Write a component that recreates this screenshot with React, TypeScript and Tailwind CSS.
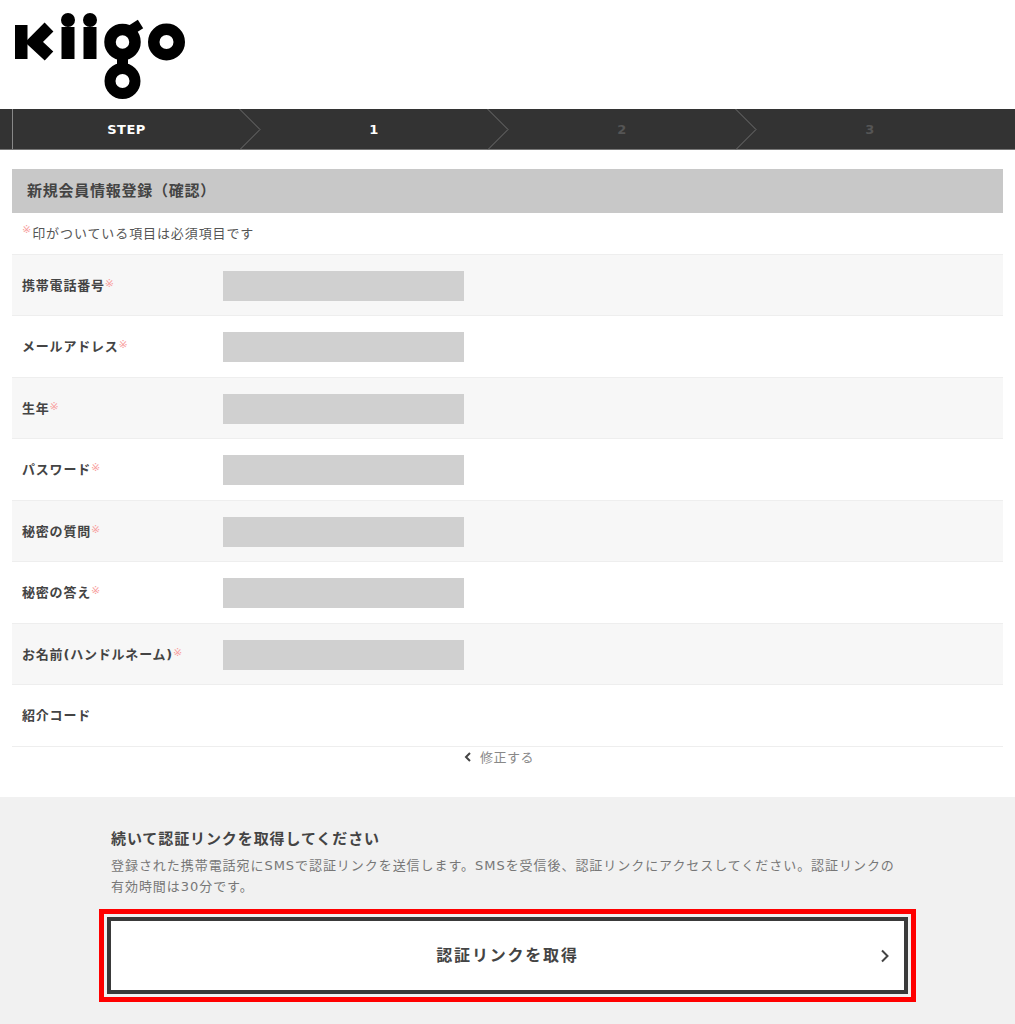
const font = "font-['DejaVu_Sans','Noto_Sans_CJK_JP',sans-serif]";

const rows = [
  { label: "携帯電話番号", required: true, value: true },
  { label: "メールアドレス", required: true, value: true },
  { label: "生年", required: true, value: true },
  { label: "パスワード", required: true, value: true },
  { label: "秘密の質問", required: true, value: true },
  { label: "秘密の答え", required: true, value: true },
  { label: "お名前(ハンドルネーム)", required: true, value: true },
  { label: "紹介コード", required: false, value: false },
];

const steps = [
  { label: "STEP", color: "text-white" },
  { label: "1", color: "text-white" },
  { label: "2", color: "text-[#555555]" },
  { label: "3", color: "text-[#555555]" },
];

function Logo() {
  return (
    <svg width="200" height="109" viewBox="0 0 200 109" className="block">
      <rect x="15" y="25" width="12.5" height="34" />
      <path d="M49 27 L34 42 L49 56" fill="none" stroke="#000" strokeWidth="12.5" />
      <rect x="61.5" y="27" width="13" height="32" />
      <circle cx="68" cy="20" r="7" />
      <rect x="83.5" y="27" width="13" height="32" />
      <circle cx="90" cy="20" r="7" />
      <circle cx="122.5" cy="42" r="12.5" fill="none" stroke="#000" strokeWidth="11.5" />
      <circle cx="122.5" cy="81" r="12.5" fill="none" stroke="#000" strokeWidth="11" />
      <rect x="117" y="58" width="11" height="8" />
      <path d="M128 32 L140.5 24" fill="none" stroke="#000" strokeWidth="10" />
      <circle cx="166.5" cy="42" r="12.75" fill="none" stroke="#000" strokeWidth="11.5" />
    </svg>
  );
}

function StepBar() {
  return (
    <div className="flex h-[41px] border-b border-[#777777] bg-[#333333] pl-3">
      <div className="flex border-l border-[#888888]">
        {steps.map((s, i) => (
          <div
            key={s.label}
            className={`relative flex items-center justify-center pr-5 ${i === 0 ? "w-[247px]" : "w-[248px]"}`}
          >
            <span className={`relative top-px text-[13px] font-bold tracking-[0.5px] ${s.color}`}>{s.label}</span>
            {s.label !== "3" && (
              <svg width="22" height="41" viewBox="0 0 22 41" className="absolute right-[-1px] top-0">
                <path d="M0.5 0 L21 20.5 L0.5 41" fill="none" stroke="#6e6e6e" strokeWidth="1" />
              </svg>
            )}
          </div>
        ))}
      </div>
    </div>
  );
}

function Required() {
  return <span className="relative top-[-3px] text-[11px] font-normal tracking-normal text-[#f8a0a0]">※</span>;
}

export default function App() {
  return (
    <div className={`h-[1024px] overflow-hidden bg-white text-[#444444] ${font}`}>
      <Logo />
      <StepBar />

      <div className="mx-3 mt-[19px]">
        <h1 className="flex h-11 items-center bg-[#c8c8c8] px-[15px] text-[15px] font-bold tracking-[0.75px] text-[#444444]">
          新規会員情報登録（確認）
        </h1>
        <p className="flex h-[40.75px] items-center px-2.5 text-[13px] tracking-[0.9px] text-[#555555]">
          <Required />
          <span className="ml-px">印がついている項目は必須項目です</span>
        </p>
        {rows.map((row, i) => (
          <div
            key={row.label}
            className={`flex h-[61.5px] items-center border-t border-[#eeeeee] px-2.5 pt-px ${i % 2 === 0 ? "bg-[#f7f7f7]" : "bg-white"}`}
          >
            <div className="w-[201px] text-[13px] font-bold tracking-[0.8px] text-[#444444]">
              {row.label}
              {row.required && <Required />}
            </div>
            {row.value && <div className="h-[30px] w-[241px] bg-[#d0d0d0]" />}
          </div>
        ))}
        <div className="flex h-[22.25px] items-center justify-center gap-2 border-t border-[#eeeeee] pr-[17px] text-[13px] tracking-[0.5px] text-[#888888]">
          <svg width="8" height="10" viewBox="0 0 8 10">
            <path d="M6 1 L2 5 L6 9" fill="none" stroke="#444" strokeWidth="2" />
          </svg>
          修正する
        </div>
      </div>

      <div className="mt-[29px] h-[227px] bg-[#f1f1f1] pt-[31px]">
        <div className="mx-auto w-[793px]">
          <h2 className="text-[15px] font-bold leading-[22px] tracking-[0.9px] text-[#444444]">
            続いて認証リンクを取得してください
          </h2>
          <p className="mt-[5px] text-[13px] leading-[21px] tracking-[0.95px] text-[#777777]">
            登録された携帯電話宛にSMSで認証リンクを送信します。SMSを受信後、認証リンクにアクセスしてください。認証リンクの有効時間は30分です。
          </p>
        </div>
        <div className="mx-auto mt-3 h-[93px] w-[817px] border-[5px] border-[#ff0000] p-[3px]">
          <div className="relative flex h-full items-center justify-center border-4 border-[#3a3a3a] bg-white text-[16px] font-bold tracking-[1.8px] text-[#444444]">
            認証リンクを取得
            <svg width="10" height="14" viewBox="0 0 10 14" className="absolute right-[14px] top-1/2 -translate-y-1/2">
              <path d="M2 1.5 L7.5 7 L2 12.5" fill="none" stroke="#444" strokeWidth="2" />
            </svg>
          </div>
        </div>
      </div>
    </div>
  );
}
